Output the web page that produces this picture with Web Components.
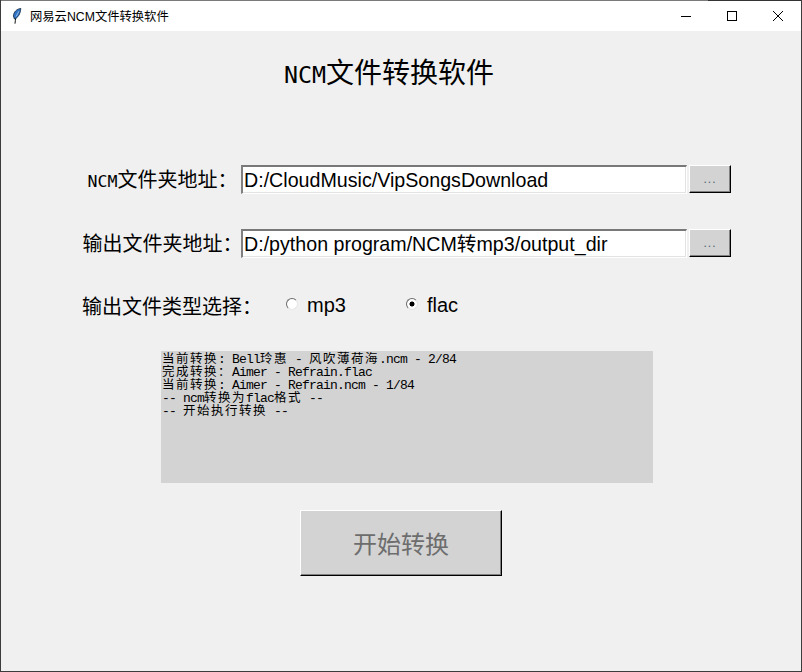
<!DOCTYPE html>
<html lang="zh">
<head>
<meta charset="utf-8">
<title>网易云NCM文件转换软件</title>
<style>
    html, body { margin: 0; padding: 0; background: #f0f0f0; }
</style>
</head>
<body>
<ncm-window>
    <title-bar slot="bar">网易云NCM文件转换软件</title-bar>
    <app-heading>NCM文件转换软件</app-heading>
    <path-row label="NCM文件夹地址：" value="D:/CloudMusic/VipSongsDownload"></path-row>
    <path-row label="输出文件夹地址：" value="D:/python program/NCM转mp3/output_dir"></path-row>
    <type-row label="输出文件类型选择：" selected="flac"></type-row>
    <log-box></log-box>
    <start-button>开始转换</start-button>
</ncm-window>

<script>
const CJK_FONT = '"Noto Sans CJK SC"';

// latin text in the Tk fonts is half the em of the CJK glyphs, so wrap ascii runs
function mixRuns(text) {
    return text.replace(/[\x20-\x7e]+/g, m => `<span class="latin">${m}</span>`);
}

class NcmWindow extends HTMLElement {
    constructor() {
        super();
        this.attachShadow({ mode: 'open' });
        this.shadowRoot.innerHTML = `
            <style>
                :host {
                    display: flex;
                    flex-direction: column;
                    box-sizing: border-box;
                    width: 802px;
                    height: 672px;
                    overflow: hidden;
                    padding-top: 1px;
                    background: linear-gradient(90deg, #7a7a7a 0 707px, #333 707px) top / 100% 1px no-repeat, #f0f0f0;
                    border: 1px solid #3c3c3c;
                    border-top: 0;
                }
                main {
                    display: flex;
                    flex-direction: column;
                    flex: 1;
                    min-height: 0;
                }
            </style>
            <slot name="bar"></slot>
            <main><slot></slot></main>
        `;
    }
}

class TitleBar extends HTMLElement {
    constructor() {
        super();
        this.attachShadow({ mode: 'open' });
        this.shadowRoot.innerHTML = `
            <style>
                :host {
                    display: flex;
                    align-items: center;
                    height: 30px;
                    flex: none;
                    background: #fff;
                    color: #000;
                    font: 12.3px "Liberation Sans", ${CJK_FONT}, sans-serif;
                }
                .feather { display: block; margin-left: 10px; }
                .name { margin-left: 7px; flex: 1; white-space: nowrap; }
                .ctl { width: 46px; height: 30px; display: flex; align-items: center; justify-content: center; }
                svg { display: block; }
            </style>
            <svg class="feather" width="12" height="16" viewBox="0 0 12 16">
                <path d="M4 15.7 C4.2 13.5 4.4 12 4.8 10" fill="none" stroke="#111" stroke-width="1"/>
                <path d="M9.8 0.4 C5.6 1 2.6 4 2.4 8 L3.4 11 C6.8 10 9.4 6 9.8 0.4 Z" fill="#2f72c4" stroke="#12263e" stroke-width="0.8"/>
                <path d="M5 8.5 L8 3.2" stroke="#a9cdee" stroke-width="0.8"/>
            </svg>
            <span class="name"><slot></slot></span>
            <span class="ctl"><svg width="10" height="10" viewBox="0 0 10 10"><path d="M0 5.5H10" stroke="#000"/></svg></span>
            <span class="ctl"><svg width="10" height="10" viewBox="0 0 10 10"><rect x="0.5" y="0.5" width="9" height="9" fill="none" stroke="#000"/></svg></span>
            <span class="ctl"><svg width="10" height="10" viewBox="0 0 10 10"><path d="M0 0L10 10M10 0L0 10" stroke="#000" stroke-width="1"/></svg></span>
        `;
    }
}

class AppHeading extends HTMLElement {
    constructor() {
        super();
        this.attachShadow({ mode: 'open' });
    }

    connectedCallback() {
        this.shadowRoot.innerHTML = `
            <style>
                :host {
                    display: block;
                    box-sizing: border-box;
                    height: 134px;
                    padding: 20px 0 0 283px;
                    color: #000;
                    font: 28px/40px ${CJK_FONT}, sans-serif;
                    white-space: nowrap;
                }
                .latin { font-family: "DejaVu Sans Mono", monospace; font-size: 23.3px; }
            </style>
            ${mixRuns(this.textContent)}
        `;
    }
}

class PathRow extends HTMLElement {
    constructor() {
        super();
        this.attachShadow({ mode: 'open' });
    }

    connectedCallback() {
        this.shadowRoot.innerHTML = `
            <style>
                :host {
                    display: flex;
                    align-items: flex-start;
                    height: 64px;
                    padding-left: 82px;
                    color: #000;
                }
                .label {
                    display: flex;
                    justify-content: center;
                    width: 159px;
                    margin-right: -1px;
                    height: 29px;
                    font: 20px/27px ${CJK_FONT}, sans-serif;
                    white-space: nowrap;
                }
                .latin { font-family: "DejaVu Sans Mono", monospace; font-size: 16.6px; }
                .entry {
                    box-sizing: border-box;
                    width: 446px;
                    height: 29px;
                    padding-left: 1px;
                    background: #fff;
                    border: 1px solid #fff;
                    border-top: 2px solid #787878;
                    border-left: 2px solid #808080;
                    box-shadow: inset -1px -1px 0 #e3e3e3;
                    font: 19.65px/26px "Liberation Sans", ${CJK_FONT}, sans-serif;
                    white-space: nowrap;
                    overflow: hidden;
                }
                .more {
                    box-sizing: border-box;
                    width: 42px;
                    height: 28px;
                    margin-left: 2px;
                    background: #d3d3d3;
                    border: 1px solid #fff;
                    border-right: 1px solid #000;
                    border-bottom: 1px solid #000;
                    box-shadow: inset -1px -1px 0 #808080;
                    color: #4f5f70;
                    font: 12px/26px "Liberation Sans", sans-serif;
                    letter-spacing: 1px;
                    text-align: center;
                }
            </style>
            <div class="label"><span>${mixRuns(this.getAttribute('label'))}</span></div>
            <div class="entry">${this.getAttribute('value')}</div>
            <div class="more">...</div>
        `;
    }
}

class TypeRow extends HTMLElement {
    constructor() {
        super();
        this.attachShadow({ mode: 'open' });
    }

    connectedCallback() {
        const selected = this.getAttribute('selected');
        const radio = (name, width) => `
            <div class="radio" style="width:${width}px">
                <i class="${name === selected ? 'on' : ''}"></i>
                <span>${name}</span>
            </div>`;
        this.shadowRoot.innerHTML = `
            <style>
                :host {
                    display: flex;
                    align-items: flex-start;
                    height: 29px;
                    padding-left: 81px;
                    color: #000;
                }
                .label {
                    width: 204px;
                    font: 20px/25px ${CJK_FONT}, sans-serif;
                    white-space: nowrap;
                }
                .radio {
                    display: flex;
                    align-items: center;
                    gap: 9px;
                    font: 20px/25px "Liberation Sans", sans-serif;
                }
                i {
                    box-sizing: border-box;
                    display: block;
                    width: 12px;
                    height: 12px;
                    margin-top: -3px;
                    border-radius: 50%;
                    background: #fff;
                    border: 1px solid;
                    border-color: #6a6a6a #e6e6e6 #e6e6e6 #6a6a6a;
                }
                i.on { background: radial-gradient(circle, #000 0 2.2px, #fff 2.8px); }
            </style>
            <div class="label">${this.getAttribute('label')}</div>
            ${radio('mp3', 120)}
            ${radio('flac', 120)}
        `;
    }
}

class LogBox extends HTMLElement {
    constructor() {
        super();
        this.attachShadow({ mode: 'open' });
        const lines = [
            '当前转换: Bell玲惠 - 风吹薄荷海.ncm - 2/84',
            '完成转换：Aimer - Refrain.flac',
            '当前转换: Aimer - Refrain.ncm - 1/84',
            '-- ncm转换为flac格式 --',
            '-- 开始执行转换 --'
        ];
        this.shadowRoot.innerHTML = `
            <style>
                :host {
                    display: block;
                    box-sizing: border-box;
                    width: 492px;
                    height: 132px;
                    margin: 29px 0 0 160px;
                    padding: 0 0 0 1px;
                    background: #d3d3d3;
                    color: #000;
                    font: 12.5px/13px ${CJK_FONT}, monospace;
                    letter-spacing: 1.5px;
                }
                div { white-space: pre; height: 13px; }
                .latin { font-family: "Liberation Mono", monospace; font-size: 13px; letter-spacing: -0.8px; }
            </style>
            ${lines.map(line => `<div>${mixRuns(line)}</div>`).join('')}
        `;
    }
}

class StartButton extends HTMLElement {
    constructor() {
        super();
        this.attachShadow({ mode: 'open' });
        this.shadowRoot.innerHTML = `
            <style>
                :host {
                    display: flex;
                    align-items: center;
                    justify-content: center;
                    box-sizing: border-box;
                    width: 202px;
                    height: 66px;
                    margin: 27px 0 0 299px;
                    padding-bottom: 2px;
                    background: #d3d3d3;
                    border: 1px solid #fff;
                    border-right-color: #000;
                    border-bottom-color: #000;
                    box-shadow: inset -1px -1px 0 #808080;
                    color: #6d6d6d;
                    font: 24px ${CJK_FONT}, sans-serif;
                }
            </style>
            <slot></slot>
        `;
    }
}

customElements.define('ncm-window', NcmWindow);
customElements.define('title-bar', TitleBar);
customElements.define('app-heading', AppHeading);
customElements.define('path-row', PathRow);
customElements.define('type-row', TypeRow);
customElements.define('log-box', LogBox);
customElements.define('start-button', StartButton);
</script>
</body>
</html>
